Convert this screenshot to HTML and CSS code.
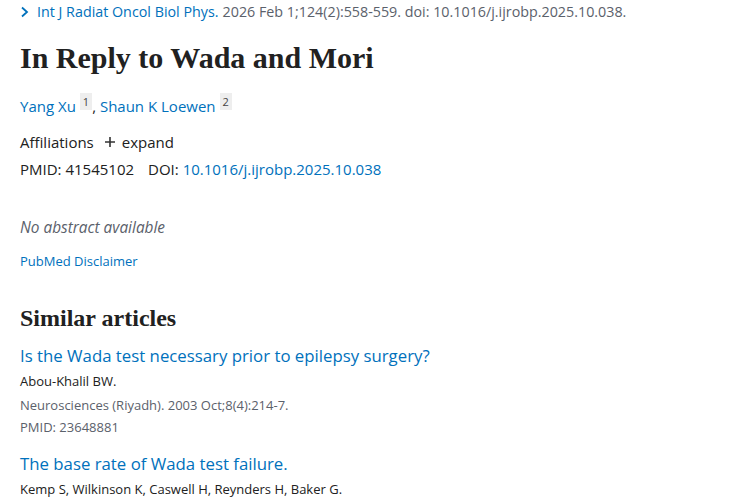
FILE: index.html
```html
<!DOCTYPE html>
<html>
<head>
<meta charset="utf-8">
<link rel="stylesheet" href="styles.css">
</head>
<body>
<main class="page">
  <div class="citation">
    <svg class="chev" width="9" height="12" viewBox="0 0 9 12"><path d="M2 1.5 L7 6 L2 10.5" fill="none" stroke="#0071bc" stroke-width="1.8"/></svg>
    <a class="link">Int J Radiat Oncol Biol Phys.</a>
    <span class="grey">2026 Feb 1;124(2):558-559. doi: 10.1016/j.ijrobp.2025.10.038.</span>
  </div>
  <h1 class="title">In Reply to Wada and Mori</h1>
  <div class="authors">
    <a class="link">Yang Xu</a><sup class="aff">1</sup>, <a class="link">Shaun K Loewen</a><sup class="aff">2</sup>
  </div>
  <div class="affil">
    <span>Affiliations</span>
    <span class="expand"><svg width="12" height="12" viewBox="0 0 12 12"><path d="M6 1 V11 M1 6 H11" stroke="#333" stroke-width="1.6"/></svg>expand</span>
  </div>
  <div class="ids">
    <span>PMID: 41545102</span>
    <span>DOI: <a class="link">10.1016/j.ijrobp.2025.10.038</a></span>
  </div>
  <p class="noabs">No abstract available</p>
  <a class="link disclaimer">PubMed Disclaimer</a>
  <h2 class="similar">Similar articles</h2>
  <div class="article">
    <a class="link atitle">Is the Wada test necessary prior to epilepsy surgery?</a>
    <div class="aauth">Abou-Khalil BW.</div>
    <div class="ameta first">Neurosciences (Riyadh). 2003 Oct;8(4):214-7.</div>
    <div class="ameta">PMID: 23648881</div>
  </div>
  <div class="article">
    <a class="link atitle">The base rate of Wada test failure.</a>
    <div class="aauth">Kemp S, Wilkinson K, Caswell H, Reynders H, Baker G.</div>
  </div>
</main>
</body>
</html>
```
FILE: styles.css
```css
html, body { margin: 0; padding: 0; background: #fff; }
body { font-family: "Open Sans", "Noto Sans", sans-serif; color: #212121; }
.page { padding: 0 20px; }
.link { color: #0071bc; text-decoration: none; }
.grey { color: #5b616b; }
.citation { font-size: 14.3px; line-height: 24px; display: flex; align-items: center; white-space: nowrap; }
.chev { margin-right: 8px; }
.citation .link { margin-right: 4px; }
.title { font-family: "Liberation Serif", serif; font-weight: bold; font-size: 30px; line-height: 40px; margin: 14px 0 0; color: #212121; }
.authors { font-size: 15px; line-height: 24px; margin-top: 16px; }
.aff { font-size: 11px; background: #eee; color: #444; padding: 1px 3px; margin-left: 4px; vertical-align: 6px; line-height: 13px; }
.affil { font-size: 15px; line-height: 24px; margin-top: 12px; display: flex; gap: 10px; }
.expand { display: inline-flex; align-items: center; gap: 6px; }
.ids { font-size: 15px; line-height: 24px; margin-top: 3px; display: flex; gap: 14px; }
.noabs { font-style: italic; color: #5b616b; font-size: 15.4px; line-height: 24px; margin: 35px 0 0; }
.disclaimer { display: block; font-size: 13px; line-height: 20px; margin-top: 11px; }
.similar { font-family: "Liberation Serif", serif; font-weight: bold; font-size: 24px; line-height: 30px; margin: 32px 0 0; }
.article { margin-top: 10px; }
.article + .article { margin-top: 13px; }
.atitle { display: block; font-size: 16.8px; line-height: 26px; }
.aauth { font-size: 13px; line-height: 22px; color: #212121; margin-top: 1px; }
.ameta { font-size: 13px; line-height: 22px; color: #5b616b; }
.ameta.first { margin-top: 2px; }
```
